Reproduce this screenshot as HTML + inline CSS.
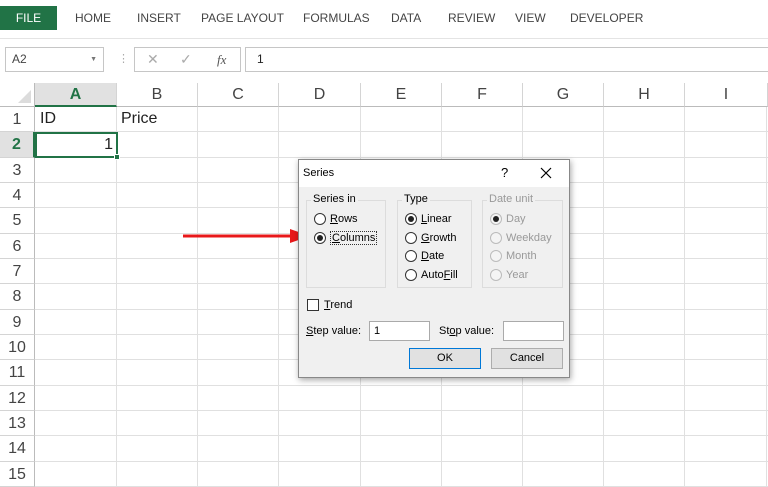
<!DOCTYPE html>
<html><head><meta charset="utf-8"><style>
*{margin:0;padding:0;box-sizing:border-box}
body{width:768px;height:487px;overflow:hidden;background:#fff;font-family:"Liberation Sans",sans-serif;position:relative;color:#444}
.a{position:absolute}
.tab{position:absolute;top:11px;font-size:12px;color:#444}
.ch{position:absolute;top:83px;height:24px;border-right:1px solid #d4d4d4;border-bottom:1px solid #bbb;background:#fff;text-align:center;font-size:16px;line-height:24px;color:#444}
.rh{position:absolute;left:0;width:35px;border-bottom:1px solid #d4d4d4;border-right:1px solid #bbb;text-align:center;font-size:16px;color:#444}
.hl{position:absolute;left:35px;right:0;height:1px;background:#e0e0e0}
.vl{position:absolute;top:107px;bottom:0;width:1px;background:#e0e0e0}
.dlg{position:absolute;left:298px;top:159px;width:272px;height:219px;background:#f0f0f0;border:1px solid #888;box-shadow:1px 2px 6px rgba(0,0,0,.35);font-size:11px;color:#000}
.grp{position:absolute;border:1px solid #dcdcdc}
.gl{position:absolute;top:-8px;left:4px;background:#f0f0f0;padding:0 2px}
.r{position:absolute;width:12px;height:12px;border:1px solid #333;border-radius:50%;background:#fff}
.r.on::after{content:"";position:absolute;left:2px;top:2px;width:6px;height:6px;border-radius:50%;background:#222}
.r.dis{border-color:#bbb;background:#f4f4f4}
.lb{position:absolute;font-size:11px}
.btn{position:absolute;height:21px;background:#e1e1e1;border:1px solid #adadad;text-align:center;line-height:19px;font-size:11px}
u{text-decoration:underline}
</style></head><body>
<div class="a" style="left:0;top:6px;width:57px;height:24px;background:#217346;color:#fff;font-size:12px;text-align:center;line-height:24px">FILE</div>
<span class="tab" style="left:75px">HOME</span>
<span class="tab" style="left:137px">INSERT</span>
<span class="tab" style="left:201px">PAGE LAYOUT</span>
<span class="tab" style="left:303px">FORMULAS</span>
<span class="tab" style="left:391px">DATA</span>
<span class="tab" style="left:448px">REVIEW</span>
<span class="tab" style="left:515px">VIEW</span>
<span class="tab" style="left:570px">DEVELOPER</span>
<div class="a" style="left:0;top:38px;width:768px;height:1px;background:#e4e4e4"></div>
<div class="a" style="left:5px;top:47px;width:99px;height:25px;border:1px solid #c6c6c6;font-size:12px;line-height:23px;padding-left:6px">A2<span style="position:absolute;right:6px;top:0;font-size:7px;color:#777">▼</span></div>
<div class="a" style="left:118px;top:52px;color:#aaa;font-size:11px">⋮</div>
<div class="a" style="left:134px;top:47px;width:107px;height:25px;border:1px solid #c6c6c6;font-size:14px;line-height:23px;color:#aaa"><span style="position:absolute;left:12px">✕</span><span style="position:absolute;left:45px">✓</span><span style="position:absolute;left:82px;color:#555;font-family:'Liberation Serif';font-style:italic;font-size:13px">fx</span></div>
<div class="a" style="left:245px;top:47px;width:523px;height:25px;border:1px solid #c6c6c6;border-right:none;font-size:12px;line-height:23px;padding-left:11px;color:#222">1</div>
<div class="a" style="left:0;top:83px;width:35px;height:24px;border-right:1px solid #bbb;border-bottom:1px solid #bbb"><div style="position:absolute;right:3px;bottom:3px;width:0;height:0;border-left:13px solid transparent;border-bottom:13px solid #dcdcdc"></div></div>
<div class="ch" style="left:35px;width:82px;background:#e1e1e1;color:#217346;font-weight:bold;border-bottom:2px solid #217346">A</div>
<div class="ch" style="left:117px;width:81px">B</div>
<div class="ch" style="left:198px;width:81px">C</div>
<div class="ch" style="left:279px;width:82px">D</div>
<div class="ch" style="left:361px;width:81px">E</div>
<div class="ch" style="left:442px;width:81px">F</div>
<div class="ch" style="left:523px;width:81px">G</div>
<div class="ch" style="left:604px;width:81px">H</div>
<div class="ch" style="left:685px;width:83px">I</div>
<div class="vl" style="left:116px"></div><div class="vl" style="left:197px"></div><div class="vl" style="left:278px"></div><div class="vl" style="left:360px"></div><div class="vl" style="left:441px"></div><div class="vl" style="left:522px"></div><div class="vl" style="left:603px"></div><div class="vl" style="left:684px"></div><div class="vl" style="left:766px"></div>
<div id="rows"></div>
<script>
var h='';for(var i=1;i<=15;i++){var t=107+(i-1)*25.33;h+='<div class="rh" style="top:'+t+'px;height:25.33px;line-height:25px;'+(i==2?'background:#e1e1e1;color:#217346;font-weight:bold;border-right:2px solid #217346':'')+'">'+i+'</div><div class="hl" style="top:'+(t+24.33)+'px"></div>';}
document.getElementById('rows').innerHTML=h;
</script>
<div class="a" style="left:40px;top:110px;font-size:16px;color:#222">ID</div>
<div class="a" style="left:121px;top:110px;font-size:16px;color:#222">Price</div>
<div class="a" style="left:35px;top:132px;width:83px;height:26px;border:2px solid #217346;font-size:16px;color:#222;text-align:right;padding-right:3px;line-height:22px">1</div>
<div class="a" style="left:114px;top:154px;width:6px;height:6px;background:#217346;border:1px solid #fff"></div>
<svg class="a" style="left:180px;top:226px" width="135" height="20"><line x1="3" y1="10" x2="112" y2="10" stroke="#e8181a" stroke-width="3"/><polygon points="110,3 130,10 110,17" fill="#e8181a"/></svg>
<div class="dlg">
<div class="a" style="left:0;top:0;width:270px;height:27px;background:#fff"></div>
<div class="lb" style="left:4px;top:7px">Series</div>
<div class="lb" style="left:202px;top:5px;font-size:13px">?</div>
<svg class="a" style="left:241px;top:7px" width="12" height="12"><path d="M1 1L11 11M11 1L1 11" stroke="#000" stroke-width="1.2"/></svg>
<div class="grp" style="left:7px;top:40px;width:80px;height:88px"><span class="gl">Series in</span></div>
<div class="grp" style="left:98px;top:40px;width:75px;height:88px"><span class="gl">Type</span></div>
<div class="grp" style="left:183px;top:40px;width:81px;height:88px;"><span class="gl" style="color:#999">Date unit</span></div>
<div class="r" style="left:15px;top:53px"></div><div class="lb" style="left:31px;top:53px"><u>R</u>ows</div>
<div class="r on" style="left:15px;top:72px"></div><div class="lb" style="left:31px;top:71px;border:1px dotted #333;padding:0 1px"><u>C</u>olumns</div>
<div class="r on" style="left:106px;top:53px"></div><div class="lb" style="left:122px;top:53px"><u>L</u>inear</div>
<div class="r" style="left:106px;top:72px"></div><div class="lb" style="left:122px;top:72px"><u>G</u>rowth</div>
<div class="r" style="left:106px;top:90px"></div><div class="lb" style="left:122px;top:90px"><u>D</u>ate</div>
<div class="r" style="left:106px;top:109px"></div><div class="lb" style="left:122px;top:109px">Auto<u>F</u>ill</div>
<div class="r dis on" style="left:191px;top:53px"></div><div class="lb" style="left:207px;top:53px;color:#999">Day</div>
<div class="r dis" style="left:191px;top:72px"></div><div class="lb" style="left:207px;top:72px;color:#999">Weekday</div>
<div class="r dis" style="left:191px;top:90px"></div><div class="lb" style="left:207px;top:90px;color:#999">Month</div>
<div class="r dis" style="left:191px;top:109px"></div><div class="lb" style="left:207px;top:109px;color:#999">Year</div>
<div class="a" style="left:8px;top:139px;width:12px;height:12px;border:1px solid #333;background:#fff"></div><div class="lb" style="left:25px;top:139px"><u>T</u>rend</div>
<div class="lb" style="left:7px;top:165px"><u>S</u>tep value:</div>
<div class="a" style="left:70px;top:161px;width:61px;height:20px;border:1px solid #aaa;background:#fff;padding-left:4px;line-height:18px">1</div>
<div class="lb" style="left:140px;top:165px">St<u>o</u>p value:</div>
<div class="a" style="left:204px;top:161px;width:61px;height:20px;border:1px solid #aaa;background:#fff"></div>
<div class="btn" style="left:110px;top:188px;width:72px;border:1px solid #0078d7">OK</div>
<div class="btn" style="left:192px;top:188px;width:72px">Cancel</div>
</div>
</body></html>
